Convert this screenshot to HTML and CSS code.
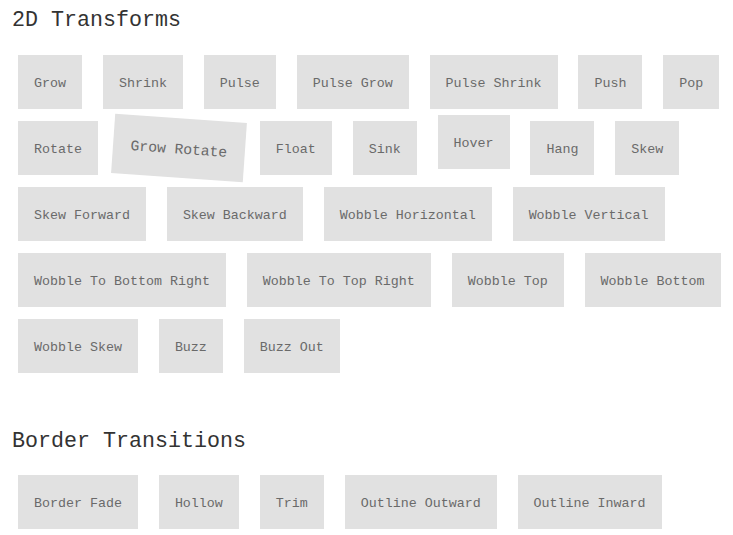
FILE: index.html
```html
<!DOCTYPE html>
<html>
<head>
<meta charset="utf-8">
<link rel="stylesheet" href="styles.css">
</head>
<body>
<section class="group">
  <h2 class="title">2D Transforms</h2>
  <div class="buttons">
    <a class="btn">Grow</a>
    <a class="btn">Shrink</a>
    <a class="btn">Pulse</a>
    <a class="btn">Pulse Grow</a>
    <a class="btn">Pulse Shrink</a>
    <a class="btn">Push</a>
    <a class="btn">Pop</a>
    <a class="btn">Rotate</a>
    <a class="btn grow-rotate">Grow Rotate</a>
    <a class="btn">Float</a>
    <a class="btn">Sink</a>
    <a class="btn hover-up">Hover</a>
    <a class="btn">Hang</a>
    <a class="btn">Skew</a>
    <a class="btn">Skew Forward</a>
    <a class="btn">Skew Backward</a>
    <a class="btn">Wobble Horizontal</a>
    <a class="btn">Wobble Vertical</a>
    <a class="btn">Wobble To Bottom Right</a>
    <a class="btn">Wobble To Top Right</a>
    <a class="btn">Wobble Top</a>
    <a class="btn">Wobble Bottom</a>
    <a class="btn">Wobble Skew</a>
    <a class="btn">Buzz</a>
    <a class="btn">Buzz Out</a>
  </div>
</section>
<section class="group second">
  <h2 class="title">Border Transitions</h2>
  <div class="buttons">
    <a class="btn">Border Fade</a>
    <a class="btn">Hollow</a>
    <a class="btn">Trim</a>
    <a class="btn">Outline Outward</a>
    <a class="btn">Outline Inward</a>
  </div>
</section>
</body>
</html>
```

FILE: styles.css
```css
html, body {
  margin: 0;
  padding: 0;
  background: #ffffff;
}

body {
  font-family: "Liberation Mono", "DejaVu Sans Mono", monospace;
  overflow: hidden;
}

.group {
  display: flex;
  flex-direction: column;
}

.title {
  margin: 6px 0 19px 12px;
  height: 30px;
  line-height: 30px;
  font-size: 21.67px;
  font-weight: normal;
  color: #333333;
}

.second {
  margin-top: 53px;
}

.second .title {
  margin-top: 0;
  padding-top: 1px;
  height: 29px;
}

.buttons {
  display: flex;
  flex-wrap: wrap;
  column-gap: 20.9px;
  row-gap: 12px;
  padding-left: 18px;
}

.btn {
  display: block;
  box-sizing: border-box;
  height: 54px;
  background: #e1e1e1;
  color: #6a6a6a;
  font-size: 13.34px;
  line-height: 22px;
  padding: 18px 16px 14px 16px;
  white-space: pre;
}

.grow-rotate {
  transform: scale(1.1) rotate(4deg);
}

.hover-up {
  transform: translateY(-6px);
}
```
